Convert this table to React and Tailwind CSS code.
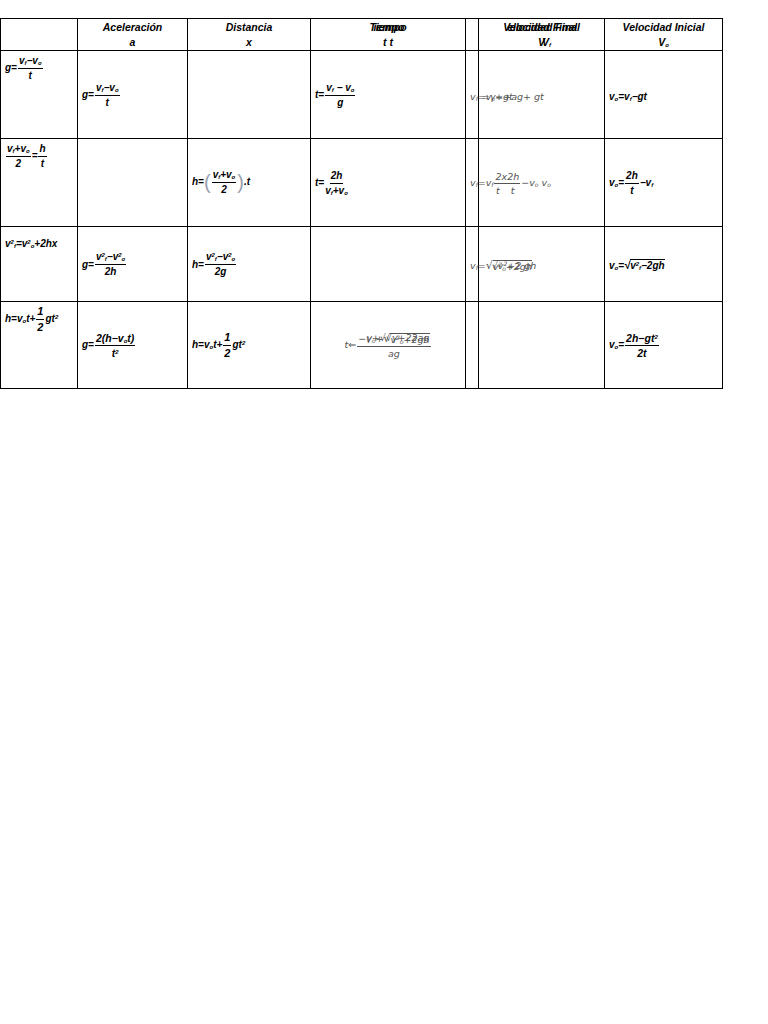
import React from "react";

// fracción simple
const Frac = ({ n, d, className = "" }) => (
  <span className={"inline-flex flex-col items-center align-middle leading-none mx-[1px] " + className}>
    <span className="border-b border-current px-[1px] pb-[2px]">{n}</span>
    <span className="pt-[2px]">{d}</span>
  </span>
);

const Sub = ({ children }) => <sub className="text-[6px] leading-none relative top-[1px]">{children}</sub>;
const Sup = ({ children }) => <sup className="text-[6px] leading-none">{children}</sup>;

const Raiz = ({ children }) => (
  <span className="inline-flex items-end">
    <span className="text-[11px] leading-none">√</span>
    <span className="border-t border-current leading-none pt-[1px]">{children}</span>
  </span>
);

// texto encimado (render roto del pdf)
const Encimado = ({ a, b, dx = 3 }) => (
  <span className="relative inline-block whitespace-nowrap">
    <span>{a}</span>
    <span className="absolute top-0" style={{ left: dx }}>{b}</span>
  </span>
);

const M = ({ children, className = "" }) => (
  <span className={"font-bold italic text-[10px] whitespace-nowrap text-black " + className}>{children}</span>
);

const G = ({ children }) => (
  <span className="italic text-[9.5px] whitespace-nowrap text-[#555] font-['DejaVu_Sans',sans-serif]">{children}</span>
);

const td = "border border-black align-middle px-[4px] overflow-visible";
const tdTop = "border border-black align-top px-[4px] pt-[3px]";
const th = "border border-black text-center align-middle font-bold italic text-[10.5px] leading-[15px] whitespace-nowrap text-black";

export default function App() {
  return (
    <div className="w-[768px] h-[1024px] bg-white font-['Liberation_Sans',sans-serif] text-black pt-[18px]">
      <table className="table-fixed border-collapse w-[722px]">
        <colgroup>
          <col className="w-[77px]" />
          <col className="w-[110px]" />
          <col className="w-[123px]" />
          <col className="w-[155px]" />
          <col className="w-[13px]" />
          <col className="w-[126px]" />
          <col className="w-[118px]" />
        </colgroup>
        <tbody>
          <tr className="h-[32px]">
            <td className={th}></td>
            <td className={th}>Aceleración<br />a</td>
            <td className={th}>Distancia<br />x</td>
            <td className={th}>
              <Encimado a="Tiempo" b="iempo" dx={4} /><br />t t
            </td>
            <td className={th}></td>
            <td className={th}>
              <Encimado a="Velocidad Final" b="elocidad Final" dx={4} /><br />
              <Encimado a="V" b={<>V<Sub>f</Sub></>} dx={4} />
            </td>
            <td className={th}>Velocidad Inicial<br />V<Sub>o</Sub></td>
          </tr>

          {/* fila 1 */}
          <tr className="h-[88px]">
            <td className={tdTop}>
              <M>g=<Frac n={<>v<Sub>f</Sub>−v<Sub>o</Sub></>} d="t" /></M>
            </td>
            <td className={td}>
              <M>g=<Frac n={<>v<Sub>f</Sub>−v<Sub>o</Sub></>} d="t" /></M>
            </td>
            <td className={td}></td>
            <td className={td}>
              <M>t=<Frac n={<>v<Sub>f</Sub> − v<Sub>o</Sub></>} d="g" /></M>
            </td>
            <td className={td + " px-[4px]"}>
              <G>
                v<Sub>f</Sub><Encimado a={<>=v<Sub>o</Sub>+gt</>} b="=γ=+ag+ gt" dx={4} />
              </G>
            </td>
            <td className={td}></td>
            <td className={td}>
              <M>v<Sub>o</Sub>=v<Sub>f</Sub>−gt</M>
            </td>
          </tr>

          {/* fila 2 */}
          <tr className="h-[88px]">
            <td className={tdTop}>
              <M>
                <Frac n={<>v<Sub>f</Sub>+v<Sub>o</Sub></>} d="2" />=<Frac n="h" d="t" />
              </M>
            </td>
            <td className={td}></td>
            <td className={td}>
              <M>
                h=<span className="text-gray-400 text-[20px] font-normal not-italic align-middle">(</span>
                <Frac n={<>v<Sub>f</Sub>+v<Sub>o</Sub></>} d="2" />
                <span className="text-gray-400 text-[20px] font-normal not-italic align-middle">)</span>.t
              </M>
            </td>
            <td className={td}>
              <M>t=<Frac n="2h" d={<>v<Sub>f</Sub>+v<Sub>o</Sub></>} /></M>
            </td>
            <td className={td}>
              <G>
                v<Sub>f</Sub>=v<Sub>f</Sub>
                <Frac n="2x2h" d={<span className="tracking-[4px]">t t</span>} />
                −v<Sub>o</Sub> v<Sub>o</Sub>
              </G>
            </td>
            <td className={td}></td>
            <td className={td}>
              <M>v<Sub>o</Sub>=<Frac n="2h" d="t" />−v<Sub>f</Sub></M>
            </td>
          </tr>

          {/* fila 3 */}
          <tr className="h-[75px]">
            <td className={tdTop}>
              <M>v<Sup>2</Sup><Sub>f</Sub>=v<Sup>2</Sup><Sub>o</Sub>+2hx</M>
            </td>
            <td className={td}>
              <M>g=<Frac n={<>v<Sup>2</Sup><Sub>f</Sub>−v<Sup>2</Sup><Sub>o</Sub></>} d="2h" /></M>
            </td>
            <td className={td}>
              <M>h=<Frac n={<>v<Sup>2</Sup><Sub>f</Sub>−v<Sup>2</Sup><Sub>o</Sub></>} d="2g" /></M>
            </td>
            <td className={td}></td>
            <td className={td}>
              <G>
                v<Sub>f</Sub>=
                <Encimado a={<Raiz>v<Sup>2</Sup><Sub>o</Sub>+2gh</Raiz>} b={<>√v<Sup>2</Sup>+2 gh</>} dx={6} />
              </G>
            </td>
            <td className={td}></td>
            <td className={td}>
              <M>v<Sub>o</Sub>=<Raiz>v<Sup>2</Sup><Sub>f</Sub>−2gh</Raiz></M>
            </td>
          </tr>

          {/* fila 4 */}
          <tr className="h-[87px]">
            <td className={tdTop}>
              <M>h=v<Sub>o</Sub>t+<Frac n="1" d="2" className="text-[11px]" />gt<Sup>2</Sup></M>
            </td>
            <td className={td}>
              <M>g=<Frac n={<>2(h−v<Sub>o</Sub>t)</>} d={<>t<Sup>2</Sup></>} className="text-[10.5px]" /></M>
            </td>
            <td className={td}>
              <M>h=v<Sub>o</Sub>t+<Frac n="1" d="2" className="text-[11px]" />gt<Sup>2</Sup></M>
            </td>
            <td className={td + " text-center"}>
              <G>
                t⇐
                <Frac
                  n={<Encimado a={<>−v<Sub>o</Sub>+<Raiz>v<Sup>2</Sup><Sub>o</Sub>+2gh</Raiz></>} b="γ+√√γ+22ag" dx={8} />}
                  d="ag"
                />
              </G>
            </td>
            <td className={td}></td>
            <td className={td}></td>
            <td className={td}>
              <M>v<Sub>o</Sub>=<Frac n={<>2h−gt<Sup>2</Sup></>} d="2t" className="text-[10.5px]" /></M>
            </td>
          </tr>
        </tbody>
      </table>
    </div>
  );
}
